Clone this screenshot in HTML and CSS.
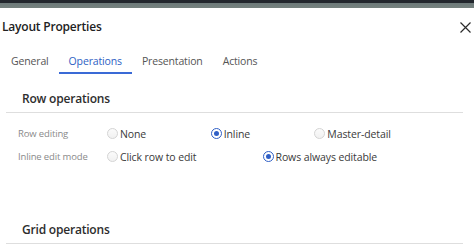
FILE: index.html
```html
<!DOCTYPE html>
<html lang="en">
<head>
    <meta charset="UTF-8">
    <title>Layout Properties</title>
    <link rel="stylesheet" href="styles.css">
</head>
<body>
    <!-- Backdrop edge above the dialog -->
    <div class="backdrop-edge"></div>

    <div class="dialog">
        <div class="dialog-header">
            <h1 class="dialog-title">Layout Properties</h1>
            <button class="close-btn" aria-label="Close">
                <svg width="11" height="11" viewBox="0 0 11 11">
                    <path d="M0.5 0.5 L10.5 10.5 M10.5 0.5 L0.5 10.5" stroke="#2b2b2b" stroke-width="1.2" fill="none"/>
                </svg>
            </button>
        </div>

        <!-- Tabs -->
        <div class="tabs">
            <div class="tab">General</div>
            <div class="tab active">Operations</div>
            <div class="tab">Presentation</div>
            <div class="tab">Actions</div>
        </div>

        <!-- Row operations -->
        <div class="section">
            <h2 class="section-title">Row operations</h2>
            <div class="field-row">
                <div class="field-label">Row editing</div>
                <div class="options">
                    <label class="radio"><span class="dot"></span>None</label>
                    <label class="radio checked"><span class="dot"></span>Inline</label>
                    <label class="radio"><span class="dot"></span>Master-detail</label>
                </div>
            </div>
            <div class="field-row">
                <div class="field-label">Inline edit mode</div>
                <div class="options">
                    <label class="radio"><span class="dot"></span>Click row to edit</label>
                    <label class="radio checked"><span class="dot"></span>Rows always editable</label>
                </div>
            </div>
        </div>

        <!-- Grid operations -->
        <div class="section grid-section">
            <h2 class="section-title">Grid operations</h2>
        </div>
    </div>
</body>
</html>
```

FILE: styles.css
```css
/* General Reset */
* {
    margin: 0;
    padding: 0;
    box-sizing: border-box;
}

body {
    font-family: "Open Sans", "Noto Sans", Arial, sans-serif;
    background-color: #ffffff;
    color: #333333;
    width: 474px;
    height: 252px;
    overflow: hidden;
}

/* Dark strip of the overlay above the dialog */
.backdrop-edge {
    height: 8px;
    background: linear-gradient(to bottom, #22262d 0, #22262d 3px, #6c7979 3px, #76827f 8px);
}

.dialog {
    background-color: #ffffff;
    padding-left: 1px;
}

.dialog-header {
    display: flex;
    justify-content: space-between;
    align-items: center;
    height: 38px;
    padding-left: 1px;
    padding-right: 3px;
}

.dialog-title {
    font-size: 12px;
    font-weight: 600;
    letter-spacing: -0.2px;
    color: #222222;
    line-height: 18px;
}

.close-btn {
    background: none;
    border: none;
    width: 11px;
    height: 11px;
    display: flex;
    margin-top: 1px;
}

/* Tabs */
.tabs {
    display: flex;
    margin-top: 2px;
}

.tab {
    font-size: 10.5px;
    letter-spacing: -0.15px;
    line-height: 16px;
    color: #555555;
    padding: 5px 10px 3px;
    border-bottom: 2px solid transparent;
}

.tab.active {
    color: #2e5fc4;
    border-bottom-color: #3a6ad6;
}

/* Sections */
.section {
    margin: 16px 11px 0 5px;
}

.section-title {
    font-size: 12px;
    font-weight: 600;
    letter-spacing: -0.2px;
    color: #2d2d2d;
    line-height: 18px;
    padding: 0 16px 4px;
    border-bottom: 1px solid #dedede;
    margin-bottom: 9px;
}

.field-row {
    display: flex;
    align-items: center;
    height: 23px;
    padding-left: 12px;
}

.field-label {
    width: 89px;
    font-size: 9.5px;
    letter-spacing: -0.15px;
    color: #8a8a8a;
}

.options {
    display: flex;
    width: 311px;
}

.radio {
    flex: 1;
    display: flex;
    align-items: center;
    gap: 2px;
    font-size: 10.5px;
    letter-spacing: -0.1px;
    color: #3a3a3a;
}

.dot {
    width: 11px;
    height: 11px;
    border-radius: 50%;
    border: 1px solid #d4d4d4;
    background: linear-gradient(to bottom, #fbfbfb, #f1f1f1);
    display: flex;
    align-items: center;
    justify-content: center;
}

.radio.checked .dot {
    border: 1.5px solid #2f5fc6;
    background: #ffffff;
}

.radio.checked .dot::after {
    content: "";
    width: 5px;
    height: 5px;
    border-radius: 50%;
    background-color: #2f5fc6;
}

.grid-section {
    margin-top: 53px;
}
```
